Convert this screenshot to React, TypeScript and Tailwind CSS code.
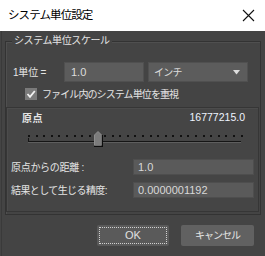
import React from 'react';

const jp = { fontFamily: '"Liberation Sans", "Noto Sans CJK JP", sans-serif' };

function Ticks() {
  const dots = Array.from({ length: 29 });
  return (
    <div className="flex justify-between ml-[21px] mr-[15px] h-[2px]">
      {dots.map((_, i) => (
        <div key={i} className="w-[2px] h-[2px] bg-[#111111]" />
      ))}
    </div>
  );
}

function Slider() {
  return (
    <div className="relative">
      <Ticks />
      {/* track */}
      <div className="mt-[4px] ml-[21px] mr-[17px] relative">
        <div className="h-[1px] bg-[#151515]" />
        <div className="h-[1px] bg-[#5e5e5e]" />
        <div className="absolute left-0 -top-[3px] w-[1px] h-[4px] bg-[#151515]" />
      </div>
      {/* thumb */}
      <svg className="absolute left-[87px] -top-[4px]" width="9" height="16" viewBox="0 0 9 16">
        <path d="M0.5 4 L4 0.5 L7.5 4 L7.5 14.5 L0.5 14.5 Z" fill="#7c7c7c" stroke="#8e8e8e" strokeWidth="1" />
        <path d="M8.5 4 L8.5 15.5 L0 15.5" fill="none" stroke="#0e0e0e" strokeWidth="1.5" />
      </svg>
    </div>
  );
}

export default function App() {
  return (
    <div className="w-[265px] h-[256px] bg-[#444444] overflow-hidden flex flex-col text-[#e4e4e4]" style={jp}>
      {/* title bar */}
      <div className="h-[31px] bg-white flex items-center justify-between pl-[8px] pr-[10px] shrink-0">
        <span className="text-[11.5px] tracking-[-0.9px] text-black">システム単位設定</span>
        <svg width="13" height="13" viewBox="0 0 13 13">
          <path d="M1 1 L12 12 M12 1 L1 12" stroke="#111" strokeWidth="1.1" />
        </svg>
      </div>

      <div className="flex-1 flex flex-col border-l border-[#3a3a3a] ml-[1px]">
        {/* group box */}
        <div className="relative mt-[10px] ml-[3px] mr-[4px] h-[174px] border border-[#333333] shadow-[inset_1px_1px_0_#4f4f4f] flex flex-col">
          <span className="absolute -top-[8px] left-[6px] px-[2px] bg-[#444444] text-[10px] leading-[14px] tracking-[-0.4px]">
            システム単位スケール
          </span>

          <div className="mt-[20px] flex items-center h-[20px]">
            <span className="w-[58px] pl-[7px] text-[10px] tracking-[-0.2px]">1単位 =</span>
            <div className="w-[80px] h-[20px] bg-[#5c5c5c] border border-[#505050] flex items-center pl-[6px] text-[11px] text-[#dcdcdc]">
              1.0
            </div>
            <div className="ml-[4px] w-[100px] h-[20px] bg-[#5c5c5c] border border-[#505050] flex items-center justify-between pl-[5px] pr-[7px]">
              <span className="text-[10px] tracking-[-0.8px] text-[#dcdcdc]">インチ</span>
              <svg width="7" height="5" viewBox="0 0 7 5">
                <path d="M0 0 L7 0 L3.5 4.5 Z" fill="#dddddd" />
              </svg>
            </div>
          </div>

          <div className="mt-[6px] flex items-center h-[12px] pl-[19px]">
            <svg width="12" height="12" viewBox="0 0 12 12">
              <rect x="0" y="0" width="12" height="12" fill="#7a7a7a" />
              <path d="M2.5 6 L5 8.8 L9.8 3" fill="none" stroke="#f2f2f2" strokeWidth="1.8" />
            </svg>
            <span className="ml-[5px] text-[10px] tracking-[-0.9px]">ファイル内のシステム単位を重視</span>
          </div>

          {/* inner panel */}
          <div className="mt-[7px] mr-[1px] h-[105px] border border-[#363636] shadow-[inset_1px_1px_0_#4c4c4c] bg-[#454545] flex flex-col">
            <div className="mt-[3px] h-[14px] flex items-center justify-between pl-[15px] pr-[13px]">
              <span className="text-[10px] font-bold tracking-[0.5px]">原点</span>
              <span className="text-[10.5px] text-[#eef4ff]">16777215.0</span>
            </div>
            <div className="mt-[10px]">
              <Slider />
            </div>
            <div className="mt-[16px] flex items-center justify-between h-[16px] pl-[4px] pr-[4px]">
              <span className="text-[10px] tracking-[-0.3px]">原点からの距離 :</span>
              <div className="w-[121px] h-[16px] bg-[#5a5a5a] border border-[#4e4e4e] flex items-center pl-[4px] text-[11px] text-[#d8d8d8]">
                1.0
              </div>
            </div>
            <div className="mt-[7px] flex items-center justify-between h-[16px] pl-[4px] pr-[4px]">
              <span className="text-[10px] tracking-[-0.6px]">結果として生じる精度:</span>
              <div className="w-[121px] h-[16px] bg-[#5a5a5a] border border-[#4e4e4e] flex items-center pl-[4px] text-[11px] text-[#d8d8d8]">
                0.0000001192
              </div>
            </div>
          </div>
        </div>

        {/* buttons */}
        <div className="mt-[10px] flex justify-end gap-[12px] pr-[11px]">
          <button className="w-[72px] h-[21px] rounded-[2px] bg-[#5a5a5a] flex items-center justify-center p-[2px]">
            <span className="w-full h-full border border-dotted border-[#d0d0d0] flex items-center justify-center text-[11px] text-[#e0e0e0]">
              OK
            </span>
          </button>
          <button className="w-[73px] h-[21px] rounded-[2px] bg-[#616161] flex items-center justify-center text-[10px] tracking-[-1px] text-[#e6e6e6]">
            キャンセル
          </button>
        </div>
      </div>
    </div>
  );
}
